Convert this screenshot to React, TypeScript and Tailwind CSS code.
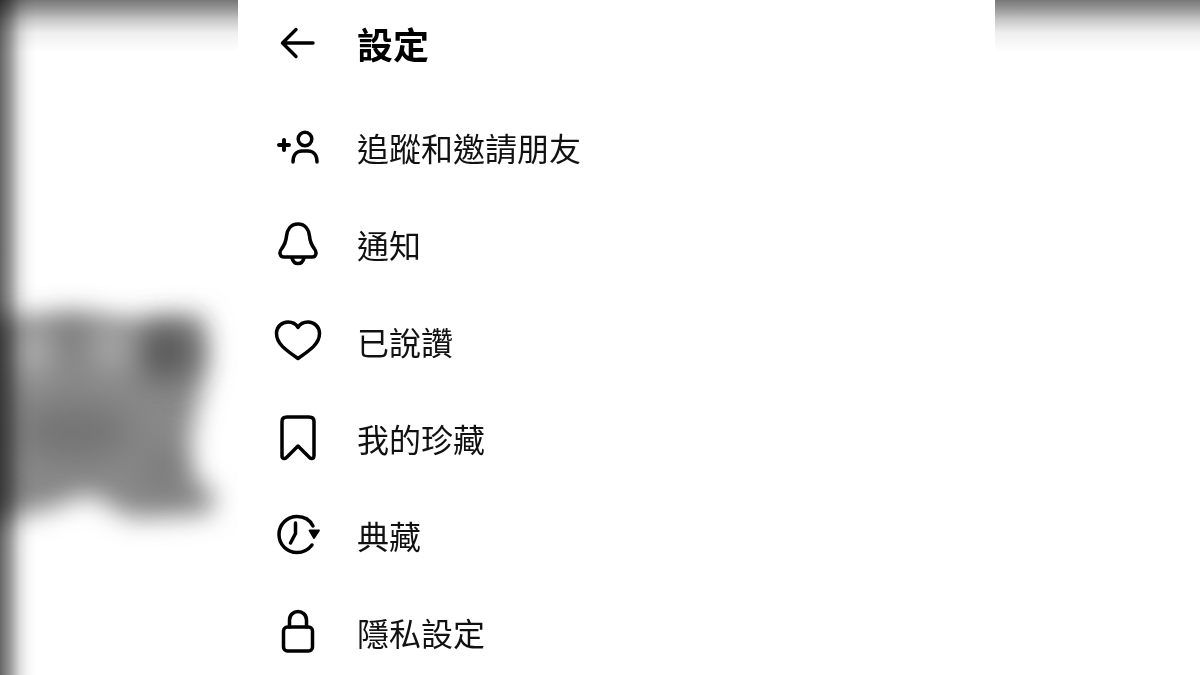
import React from 'react';

const cjk = { fontFamily: '"Noto Sans CJK TC", "Noto Sans CJK JP", sans-serif' };

const stroke = {
  fill: 'none',
  stroke: 'currentColor',
  strokeWidth: 3.5,
  strokeLinecap: 'round' as const,
  strokeLinejoin: 'round' as const,
};

// every icon sits in a 48px box, x 274-322 on the page
const Icon: React.FC<{ children: React.ReactNode }> = ({ children }) => (
  <svg width="48" height="48" viewBox="0 0 48 48" className="shrink-0 text-black overflow-visible">
    <g {...stroke}>{children}</g>
  </svg>
);

const rows: { label: string; icon: React.ReactNode }[] = [
  {
    label: '追蹤和邀請朋友',
    icon: (
      <>
        <path d="M5 20h10M10 15v10" strokeWidth={4} />
        <circle cx="31" cy="14" r="6.8" />
        <path d="M19 37c0-7 3.500-11 9-11h6c5.500 0 9 4 9 11" />
      </>
    ),
  },
  {
    label: '通知',
    icon: (
      <>
        <path d="M24 2C16.500 2 13 8 12.500 14 12 20 10.500 23 7.500 27 5 30 5.500 35 10 35H38C42.500 35 43 30 40.500 27 37.500 23 36 20 35.500 14 35 8 31.500 2 24 2Z" />
        <path d="M18 36c1 4 3.500 5.500 6 5.500s5-1.500 6-5.500" />
      </>
    ),
  },
  {
    label: '已說讚',
    icon: (
      <path d="M24 39.500C11 30.500 2.500 24.500 2.500 14.500 2.500 7.500 8 3 14 3 18.500 3 22 5 24 8.500 26 5 29.500 3 34 3 40 3 45.500 7.500 45.500 14.500 45.500 24.500 37 30.500 24 39.500z" />
    ),
  },
  {
    label: '我的珍藏',
    icon: (
      <path d="M8 40V5.500c0-3 2-4.500 5-4.500h22c3 0 5 1.500 5 4.500V40c0 2.500-2.500 3.500-4.500 1.500L24 30 12.500 41.500C10.500 43.500 8 42.500 8 40z" />
    ),
  },
  {
    label: '典藏',
    icon: (
      <>
        <path d="M39 13C36 7 30 3.500 23 3.500 13 3.500 5 11.500 5 21.500S13 39.500 23 39.500C29 39.500 34.500 36.500 38 32" />
        <path d="M21.500 10v10.500L16.500 30" />
        <path d="M35.500 17.500h9.500l-5 7.500z" fill="currentColor" strokeWidth={1.8} />
      </>
    ),
  },
  {
    label: '隱私設定',
    icon: (
      <>
        <rect x="9.500" y="17" width="29" height="24" rx="4" />
        <path d="M15.500 17v-7c0-5 4-8.500 8.500-8.500s8.500 3.500 8.500 8.500v7" />
      </>
    ),
  },
];

const BlurredPanel: React.FC = () => (
  <div className="relative w-[238px] h-full overflow-hidden shrink-0 bg-white">
    {/* blurred photo behind the sheet */}
    <svg width="238" height="675" className="absolute inset-0">
      <defs>
        <filter id="soft" x="-30%" y="-30%" width="160%" height="160%">
          <feGaussianBlur stdDeviation="13" />
        </filter>
        <filter id="softer" x="-60%" y="-60%" width="220%" height="220%">
          <feGaussianBlur stdDeviation="16" />
        </filter>
      </defs>
      <g filter="url(#soft)">
        <path d="M-20 318 L90 314 L130 320 L204 315 L208 360 L192 430 L186 470 L216 496 L210 514 L130 518 L90 494 L40 512 L-20 522 Z" fill="#888888" />
      </g>
      <g filter="url(#softer)">
        <ellipse cx="30" cy="352" rx="20" ry="24" fill="#b4b4b4" />
        <ellipse cx="112" cy="348" rx="16" ry="22" fill="#b4b4b4" />
        <ellipse cx="166" cy="352" rx="30" ry="28" fill="#585858" />
        <ellipse cx="70" cy="335" rx="18" ry="16" fill="#787878" />
        <ellipse cx="75" cy="432" rx="55" ry="28" fill="#747474" />
        <ellipse cx="165" cy="470" rx="20" ry="24" fill="#7a7a7a" />
      </g>
    </svg>
    <div className="absolute inset-y-0 left-0 w-[36px] mix-blend-multiply bg-[linear-gradient(to_right,#666666_0px,#999999_10px,#dddddd_20px,#f6f6f6_28px,#ffffff_36px)]" />
    <div className="absolute inset-x-0 top-0 h-[52px] mix-blend-multiply bg-[linear-gradient(to_bottom,#777777_0px,#9c9c9c_10px,#c8c8c8_20px,#efefef_33px,#ffffff_52px)]" />
  </div>
);

export default function App() {
  return (
    <div className="flex w-[1200px] h-[675px] overflow-hidden bg-white" style={cjk}>
      <BlurredPanel />

      <div className="w-[757px] h-full shrink-0 bg-white text-black pl-[36px]">
        <div className="flex items-center h-[90px]">
          <svg width="48" height="48" viewBox="0 0 48 48" className="shrink-0">
            <path d="M39 22H10M22 8.500 8.500 22 22 35.500" fill="none" stroke="black" strokeWidth="3.400" strokeLinecap="round" strokeLinejoin="round" />
          </svg>
          <h1 className="ml-[35px] pb-[4px] text-[36px] font-bold leading-none">設定</h1>
        </div>

        <div className="pt-[10px]">
          {rows.map(row => (
            <div key={row.label} className="flex items-center h-[97px]">
              <Icon>{row.icon}</Icon>
              <span className="ml-[35px] pb-[4px] text-[32px] leading-none font-normal text-[#111]">{row.label}</span>
            </div>
          ))}
        </div>
      </div>

      <div className="flex-1 h-full bg-[linear-gradient(to_bottom,#777777_0px,#9c9c9c_10px,#c8c8c8_20px,#efefef_33px,#ffffff_52px)]" />
    </div>
  );
}
